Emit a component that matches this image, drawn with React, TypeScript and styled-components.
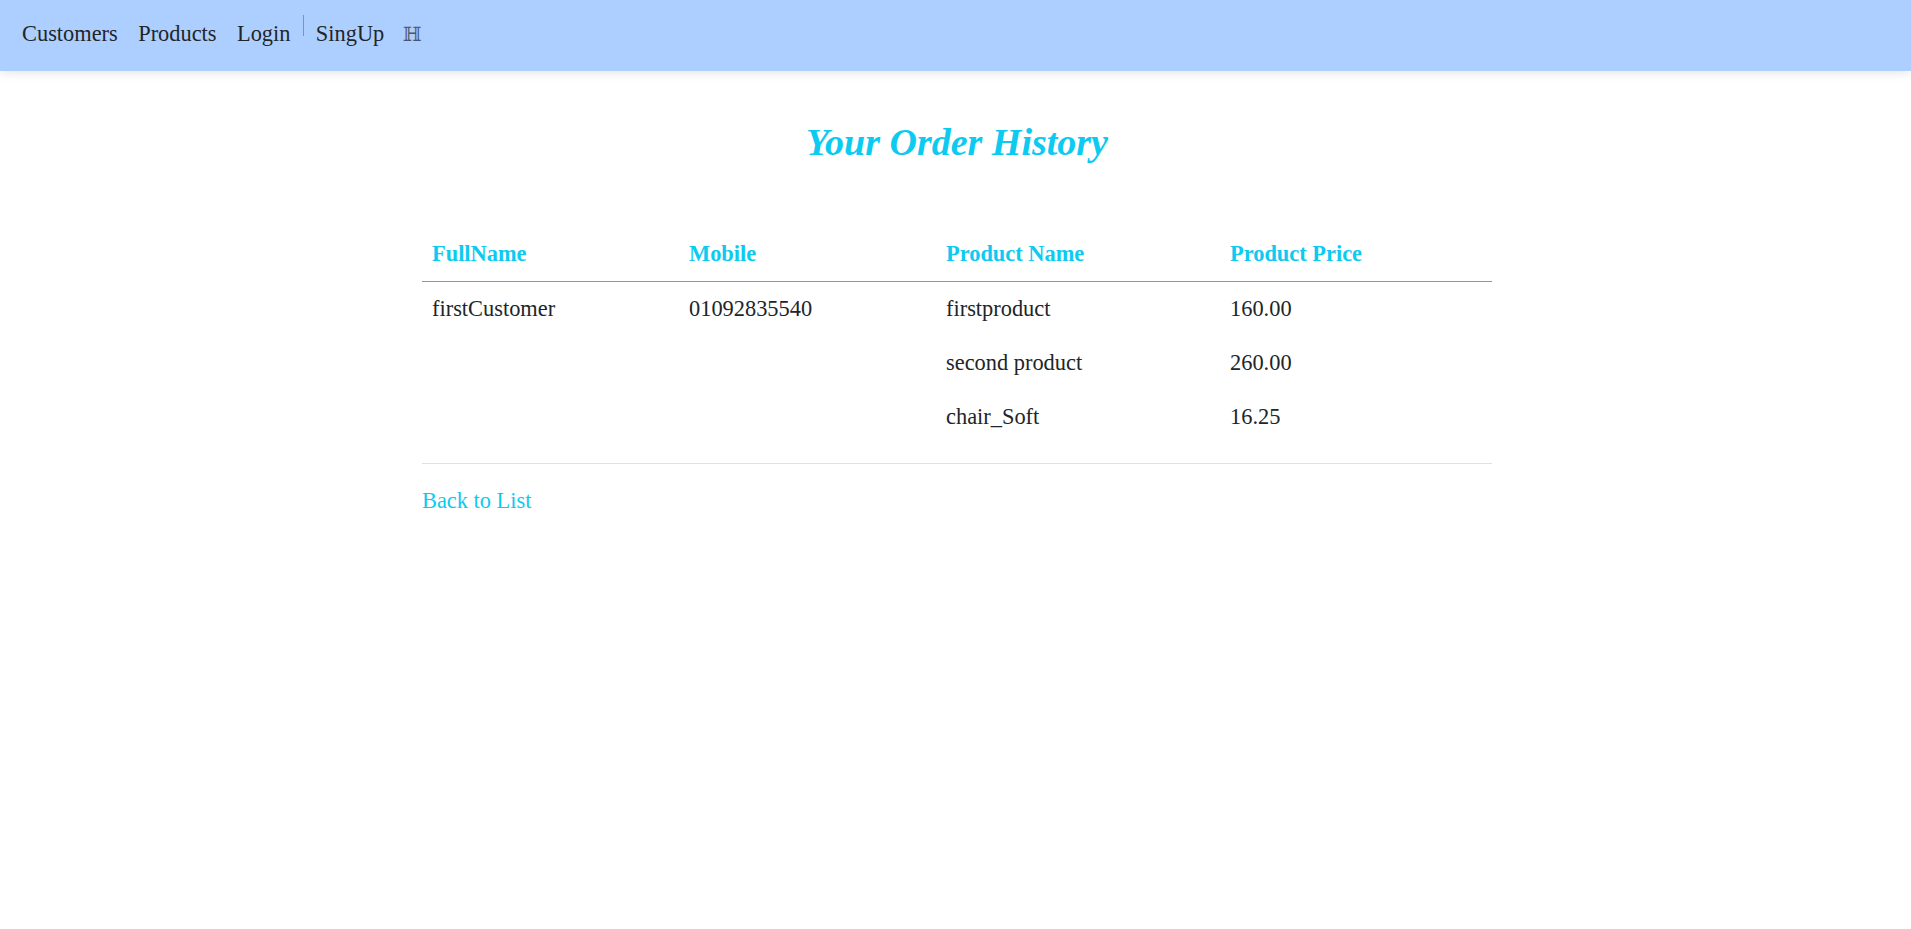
import styled, { createGlobalStyle } from 'styled-components';

const GlobalStyle = createGlobalStyle`
  * {
    box-sizing: border-box;
  }

  body {
    margin: 0;
    background: #fff;
    color: #212529;
    font-family: "Liberation Serif", "Times New Roman", serif;
    font-size: 22.4px;
    line-height: 1.5;
  }
`;

const Navbar = styled.nav`
  display: flex;
  align-items: center;
  height: 71px;
  padding: 0 22px 3px;
  background: #adcfff;
  box-shadow: 0 2px 10px rgba(0, 0, 0, 0.1);
`;

const NavLink = styled.a`
  margin-right: 20.4px;
  color: #212529;
  text-decoration: none;
`;

const Divider = styled.span`
  align-self: flex-start;
  width: 1px;
  height: 21px;
  margin: 15px 12px 0 -8px;
  background: #7f93ad;
`;

const HGlyph = styled.span`
  margin-left: -2px;
  color: #4d5666;
  font-family: "DejaVu Serif", serif;
  font-size: 20px;
`;

const Main = styled.main`
  width: 1073px;
  margin: 0 auto;
  padding-left: 3px;
`;

const Title = styled.h1`
  margin: 0;
  padding: 48px 0 62px;
  color: #0dcaf0;
  font-size: 38px;
  font-style: italic;
  font-weight: 700;
  line-height: 46px;
  text-align: center;
`;

const Table = styled.table`
  width: 100%;
  border-collapse: collapse;
  table-layout: fixed;
`;

const Th = styled.th<{ $width: number }>`
  width: ${({ $width }) => $width}px;
  padding: 10px;
  border-bottom: 1px solid #0dcaf0;
  color: #0dcaf0;
  font-weight: 700;
  text-align: left;
`;

const Td = styled.td`
  height: 54.4px;
  padding: 10px;
  color: #212529;
`;

const Rule = styled.hr`
  height: 1px;
  margin: 19px 0 20px;
  border: 0;
  background: #dfe1e3;
`;

const BackLink = styled.a`
  color: #0dcaf0;
  text-decoration: none;
`;

const orders = [
  { name: 'firstCustomer', mobile: '01092835540', product: 'firstproduct', price: '160.00' },
  { name: '', mobile: '', product: 'second product', price: '260.00' },
  { name: '', mobile: '', product: 'chair_Soft', price: '16.25' },
];

export default function App() {
  return (
    <>
      <GlobalStyle />
      <Navbar>
        <NavLink href="#">Customers</NavLink>
        <NavLink href="#">Products</NavLink>
        <NavLink href="#">Login</NavLink>
        <Divider />
        <NavLink href="#">SingUp</NavLink>
        <HGlyph>ℍ</HGlyph>
      </Navbar>
      <Main>
        <Title>Your Order History</Title>
        <Table>
          <thead>
            <tr>
              <Th $width={257}>FullName</Th>
              <Th $width={257}>Mobile</Th>
              <Th $width={284}>Product Name</Th>
              <Th $width={272}>Product Price</Th>
            </tr>
          </thead>
          <tbody>
            {orders.map((order) => (
              <tr key={order.product}>
                <Td>{order.name}</Td>
                <Td>{order.mobile}</Td>
                <Td>{order.product}</Td>
                <Td>{order.price}</Td>
              </tr>
            ))}
          </tbody>
        </Table>
        <Rule />
        <BackLink href="#">Back to List</BackLink>
      </Main>
    </>
  );
}
